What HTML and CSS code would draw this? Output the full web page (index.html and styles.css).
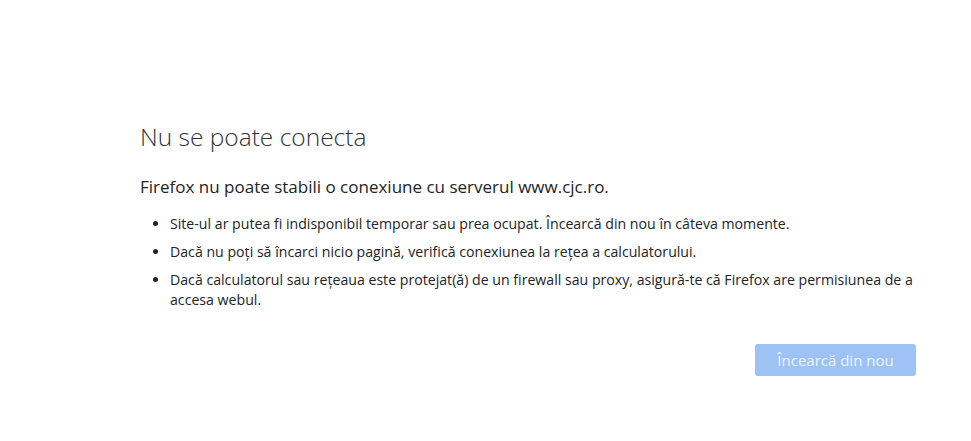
FILE: index.html
```html
<!DOCTYPE html>
<html lang="ro">
<head>
<meta charset="utf-8">
<link rel="stylesheet" href="styles.css">
</head>
<body>
<main class="container">
  <h1 class="title">Nu se poate conecta</h1>
  <p class="short-desc">Firefox nu poate stabili o conexiune cu serverul www.cjc.ro.</p>
  <ul class="long-desc">
    <li>Site-ul ar putea fi indisponibil temporar sau prea ocupat. Încearcă din nou în câteva momente.</li>
    <li>Dacă nu poți să încarci nicio pagină, verifică conexiunea la rețea a calculatorului.</li>
    <li>Dacă calculatorul sau rețeaua este protejat(ă) de un firewall sau proxy, asigură-te că Firefox are permisiunea de a accesa webul.</li>
  </ul>
  <div class="actions">
    <button class="retry">Încearcă din nou</button>
  </div>
</main>
</body>
</html>
```
FILE: styles.css
```css
html, body {
  margin: 0;
  padding: 0;
  background: #ffffff;
}
body {
  font-family: "Open Sans", "Noto Sans", sans-serif;
  color: #222426;
}
.container {
  width: 776px;
  margin-left: 140px;
  padding-top: 118px;
}
.title {
  margin: 0;
  font-size: 24.5px;
  font-weight: 300;
  line-height: 38px;
  color: #333;
}
.short-desc {
  margin: 19px 0 0;
  font-size: 17px;
  line-height: 24px;
}
.long-desc {
  margin: 15px 0 0;
  padding-left: 30px;
  font-size: 14.15px;
  line-height: 20px;
}
.long-desc li {
  margin-bottom: 8px;
}
.actions {
  display: flex;
  justify-content: flex-end;
  margin-top: 34px;
}
.retry {
  width: 161px;
  height: 32px;
  border: none;
  border-radius: 3px;
  background: #9dc2f3;
  color: #eef4fd;
  font-family: inherit;
  font-size: 15px;
  padding: 0;
}
```
